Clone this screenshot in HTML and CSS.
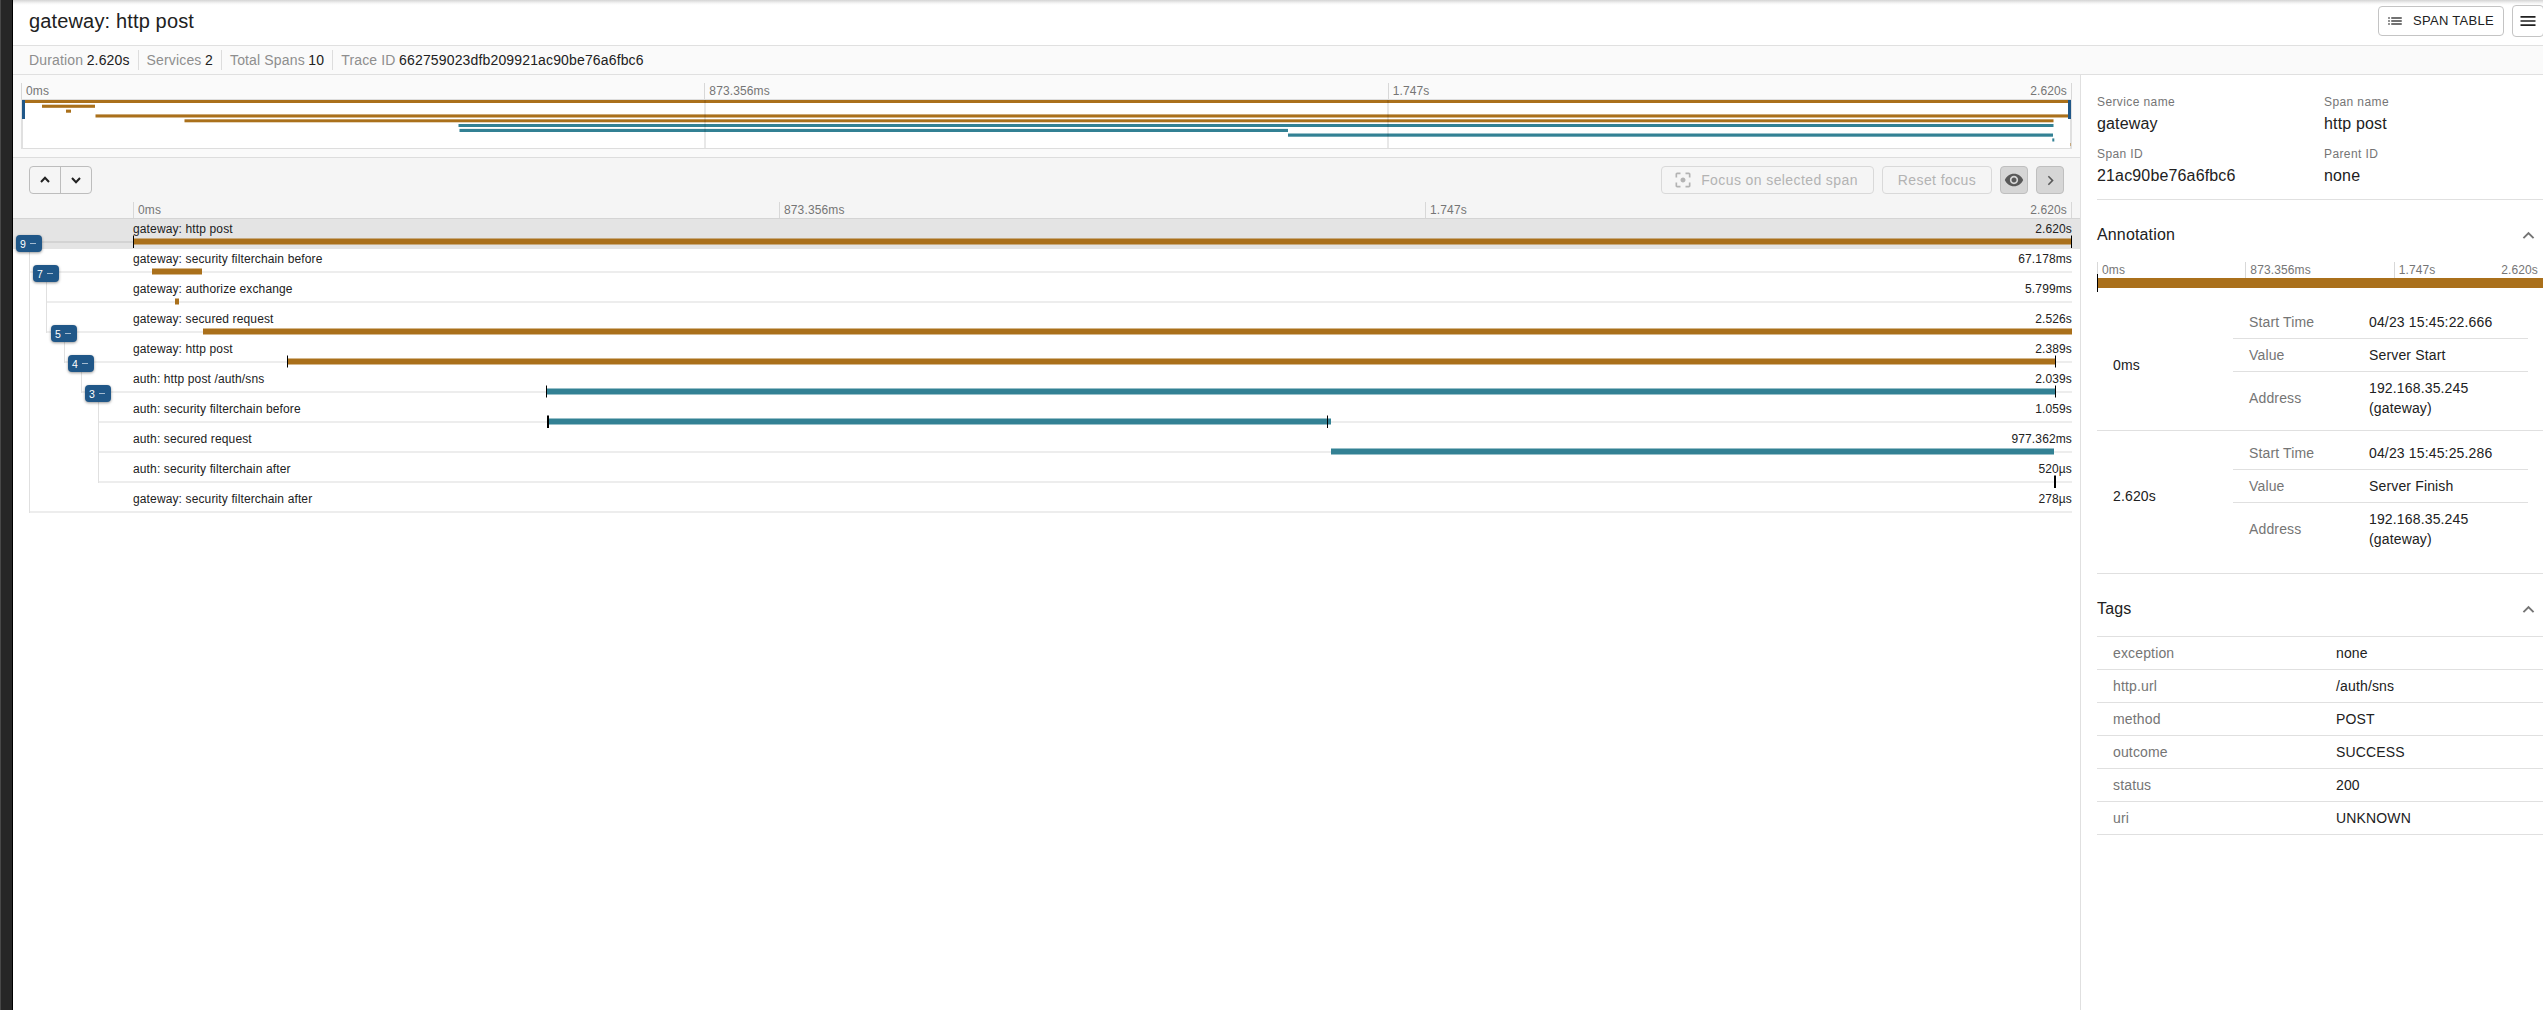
FILE: index.html
```
<!DOCTYPE html>
<html lang="en">
    <head>
        <meta charset="UTF-8" />
        <meta name="viewport" content="width=device-width, initial-scale=1.0" />
        <title>gateway: http post</title>
        <link rel="stylesheet" href="styles.css">
    </head>
    <body>
        <div class="side-strip"></div>
        <div class="page">
            <header class="header">
                <h1 class="title">gateway: http post</h1>
                <div class="header-buttons">
                    <button class="btn btn-table">
                        <svg width="18" height="18" viewBox="0 0 24 24"><path d="M3 13h2v-2H3v2zm0 4h2v-2H3v2zm0-8h2V7H3v2zm4 4h14v-2H7v2zm0 4h14v-2H7v2zM7 7v2h14V7H7z"/></svg>
                        SPAN TABLE
                    </button>
                    <button class="btn btn-menu">
                        <svg width="20" height="20" viewBox="0 0 24 24"><path d="M3 18h18v-2H3v2zm0-5h18v-2H3v2zm0-7v2h18V6H3z"/></svg>
                    </button>
                </div>
            </header>
            <div class="summary">
                <div><span>Duration</span> 2.620s</div>
                <div><span>Services</span> 2</div>
                <div><span>Total Spans</span> 10</div>
                <div><span>Trace ID</span> 662759023dfb209921ac90be76a6fbc6</div>
            </div>
            <div class="content">
                <main class="trace">
                    <section class="minimap">
                        <div class="ruler">
                            <span>0ms</span>
                            <span>873.356ms</span>
                            <span>1.747s</span>
                            <span class="last">2.620s</span>
                        </div>
                        <svg class="minimap-chart" width="2051" height="50">
                            <rect x="0" y="0" width="2051" height="50" fill="#fff"/>
                            <path d="M0 .5H2051M0 49.5H2051" stroke="#ddd"/>
                            <path d="M1 0V50M2050 0V50" stroke="#e0e0e0" stroke-width="2"/>
                            <g fill="#aa701b">
                                <rect x="1" y="1" width="2049" height="3"/>
                                <rect x="21" y="5.7" width="53" height="3.1"/>
                                <rect x="45" y="10.6" width="5" height="3.1"/>
                                <rect x="74.5" y="15.4" width="1975.5" height="3.1"/>
                                <rect x="163.5" y="20.3" width="1869" height="3"/>
                                <rect x="2049" y="44" width="1" height="3" opacity=".5"/>
                            </g>
                            <g fill="#338194">
                                <rect x="437.5" y="25" width="1595" height="3"/>
                                <rect x="438.5" y="29.9" width="828.5" height="3.1"/>
                                <rect x="1267" y="34.5" width="765" height="3.2"/>
                                <rect x="2031.3" y="39.4" width="2" height="3.1"/>
                            </g>
                            <path d="M684 1V49M1367 1V49" stroke="#000" stroke-opacity=".1" stroke-width="1.8"/>
                            <path d="M2.5 1V20M2048.5 1V20" stroke="#205788" stroke-width="3"/>
                        </svg>
                    </section>
                    <div class="toolbar">
                        <div class="btn-group">
                            <button><svg width="16" height="16"><path d="M4 10l4-4.3 4 4.3"/></svg></button>
                            <button><svg width="16" height="16"><path d="M4 6l4 4.3L12 6"/></svg></button>
                        </div>
                        <div class="toolbar-right">
                            <button class="btn btn-focus disabled">
                                <svg width="20" height="20" viewBox="0 0 24 24"><path d="M5 15H3v4c0 1.1.9 2 2 2h4v-2H5v-4zM5 5h4V3H5c-1.1 0-2 .9-2 2v4h2V5zm14-2h-4v2h4v4h2V5c0-1.1-.9-2-2-2zm0 16h-4v2h4c1.1 0 2-.9 2-2v-4h-2v4zM12 9c-1.66 0-3 1.34-3 3s1.34 3 3 3 3-1.34 3-3-1.34-3-3-3z"/></svg>
                                Focus on selected span
                            </button>
                            <button class="btn btn-reset disabled">Reset focus</button>
                            <button class="btn btn-toggle">
                                <svg width="20" height="20" viewBox="0 0 24 24"><path d="M12 4.5C7 4.5 2.73 7.61 1 12c1.73 4.39 6 7.5 11 7.5s9.27-3.11 11-7.5c-1.73-4.39-6-7.5-11-7.5zM12 17c-2.76 0-5-2.24-5-5s2.24-5 5-5 5 2.24 5 5-2.24 5-5 5zm0-8c-1.66 0-3 1.34-3 3s1.34 3 3 3 3-1.34 3-3-1.34-3-3-3z"/></svg>
                            </button>
                            <button class="btn btn-toggle">
                                <svg width="19" height="19" viewBox="0 0 24 24"><path d="M10 6L8.59 7.41 13.17 12l-4.58 4.59L10 18l6-6z"/></svg>
                            </button>
                        </div>
                    </div>
                    <div class="timeline-head">
                        <div class="ruler">
                            <span>0ms</span>
                            <span>873.356ms</span>
                            <span>1.747s</span>
                            <span class="last">2.620s</span>
                        </div>
                    </div>
                    <div class="timeline">
                        <div class="span-row selected"><span>gateway: http post</span><span>2.620s</span></div>
                        <div class="span-row"><span>gateway: security filterchain before</span><span>67.178ms</span></div>
                        <div class="span-row"><span>gateway: authorize exchange</span><span>5.799ms</span></div>
                        <div class="span-row"><span>gateway: secured request</span><span>2.526s</span></div>
                        <div class="span-row"><span>gateway: http post</span><span>2.389s</span></div>
                        <div class="span-row"><span>auth: http post /auth/sns</span><span>2.039s</span></div>
                        <div class="span-row"><span>auth: security filterchain before</span><span>1.059s</span></div>
                        <div class="span-row"><span>auth: secured request</span><span>977.362ms</span></div>
                        <div class="span-row"><span>auth: security filterchain after</span><span>520µs</span></div>
                        <div class="span-row"><span>gateway: security filterchain after</span><span>278µs</span></div>

                        <svg class="timeline-chart" width="2067" height="300">
                            <!-- tree lines -->
                            <g fill="none" stroke="#000" stroke-opacity=".07" stroke-width="2">
                                <path d="M29 23H2059M16 53H2059M34 83H2059M34 113H2059M52 143H2059M69 173H2059M86 203H2059M86 233H2059M86 263H2059M16 293H2059"/>
                            </g>
                            <path fill="none" stroke="#e0e0e0" d="M16.5 33V294M33.5 63V114M51.5 123V144M68.5 153V174M85.5 183V264"/>
                            <!-- span bars -->
                            <g fill="#aa701b">
                                <rect x="120" y="19.5" width="1939" height="6"/>
                                <rect x="139" y="49.5" width="50" height="6"/>
                                <rect x="162" y="79.5" width="4" height="6"/>
                                <rect x="190" y="109.5" width="1869" height="6"/>
                                <rect x="274" y="139.5" width="1768" height="6"/>
                            </g>
                            <g fill="#338194">
                                <rect x="533" y="169.5" width="1509.5" height="6"/>
                                <rect x="534" y="199.5" width="784" height="6"/>
                                <rect x="1318" y="229.5" width="723" height="6"/>
                            </g>
                            <!-- annotations -->
                            <path stroke="#000" d="M120.5 16.5V29M2058.5 16.5V29M274.5 136.5V148.5M2042.5 136.5V148.5M533.5 166.5V178.5M2042.5 166.5V178.5M1314.5 196.5V209"/>
                            <path stroke="#000" stroke-width="2" d="M535 196.5V209M2042 256.5V269"/>
                        </svg>
                        <div class="badge" style="left: 3px; top: 16px">9</div>
                        <div class="badge" style="left: 20px; top: 46px">7</div>
                        <div class="badge" style="left: 38px; top: 106px">5</div>
                        <div class="badge" style="left: 55px; top: 136px">4</div>
                        <div class="badge" style="left: 72px; top: 166px">3</div>
                    </div>
                </main>
                <aside class="detail">
                    <div class="info">
                        <div><label>Service name</label><p>gateway</p></div>
                        <div><label>Span name</label><p>http post</p></div>
                        <div><label>Span ID</label><p>21ac90be76a6fbc6</p></div>
                        <div><label>Parent ID</label><p>none</p></div>
                    </div>
                    <section class="annotation">
                        <div class="section-title">
                            Annotation
                            <svg width="23" height="23" viewBox="0 0 24 24"><path d="M12 8l-6 6 1.41 1.41L12 10.83l4.59 4.58L18 14z"/></svg>
                        </div>
                        <div class="ruler">
                            <span>0ms</span>
                            <span>873.356ms</span>
                            <span>1.747s</span>
                            <span class="last">2.620s</span>
                        </div>
                        <div class="annotation-bar"></div>
                        <div class="event">
                            <div class="event-time">0ms</div>
                            <div class="event-table">
                                <div><span>Start Time</span><span>04/23 15:45:22.666</span></div>
                                <div><span>Value</span><span>Server Start</span></div>
                                <div><span>Address</span><span>192.168.35.245<br>(gateway)</span></div>
                            </div>
                        </div>
                        <div class="event">
                            <div class="event-time">2.620s</div>
                            <div class="event-table">
                                <div><span>Start Time</span><span>04/23 15:45:25.286</span></div>
                                <div><span>Value</span><span>Server Finish</span></div>
                                <div><span>Address</span><span>192.168.35.245<br>(gateway)</span></div>
                            </div>
                        </div>
                    </section>
                    <section>
                        <div class="section-title">
                            Tags
                            <svg width="23" height="23" viewBox="0 0 24 24"><path d="M12 8l-6 6 1.41 1.41L12 10.83l4.59 4.58L18 14z"/></svg>
                        </div>
                        <div class="tags">
                            <div><span>exception</span><span>none</span></div>
                            <div><span>http.url</span><span>/auth/sns</span></div>
                            <div><span>method</span><span>POST</span></div>
                            <div><span>outcome</span><span>SUCCESS</span></div>
                            <div><span>status</span><span>200</span></div>
                            <div><span>uri</span><span>UNKNOWN</span></div>
                        </div>
                    </section>
                </aside>
            </div>
        </div>
    </body>
</html>
```
FILE: styles.css
```
* {
    box-sizing: border-box;
}
body {
    margin: 0;
    display: flex;
    height: 100vh;
    overflow: hidden;
    background-color: white;
    color: #212121;
    font-family: "Liberation Sans", Arial, sans-serif;
    font-size: 14px;
    line-height: 20px;
    letter-spacing: 0.15px;
}
h1,
p {
    margin: 0;
    font-weight: normal;
}
button {
    font: inherit;
    color: inherit;
    padding: 0;
    margin: 0;
    background: none;
}
svg {
    display: block;
    flex: none;
    fill: currentColor;
}

.side-strip {
    flex: none;
    width: 13px;
    background-color: #262626;
    border-left: 1px solid #484848;
    border-right: 1px solid #000;
}
.page {
    flex: 1;
    min-width: 0;
    display: flex;
    flex-direction: column;
}

/* header */
.header {
    display: flex;
    justify-content: space-between;
    align-items: center;
    height: 46px;
    padding: 0 0 3px 16px;
    border-bottom: 1px solid #e0e0e0;
    background: linear-gradient(#d4d4d4, #f4f4f4 3px, #fff 5px);
}
.title {
    font-size: 20px;
    line-height: 32px;
}
.header-buttons {
    display: flex;
    align-items: center;
    gap: 8px;
    margin-right: -1px;
}
.btn {
    display: flex;
    align-items: center;
    justify-content: center;
    height: 28px;
    border: 1px solid #c4c4c4;
    border-radius: 4px;
    letter-spacing: 0.4px;
    white-space: nowrap;
}
.btn-table {
    width: 126px;
    height: 30px;
    gap: 9px;
    padding-right: 2px;
    font-size: 13px;
    letter-spacing: 0.3px;
}
.btn-table svg {
    color: #444;
}
.btn-menu {
    width: 32px;
    height: 32px;
}

.summary {
    display: flex;
    align-items: center;
    height: 29px;
    padding-left: 16px;
    background-color: #fafafa;
    border-bottom: 1px solid #e0e0e0;
}
.summary div {
    padding-right: 8px;
    margin-right: 8px;
    border-right: 1px solid #ddd;
}
.summary div:last-child {
    border: none;
}
.summary span {
    margin-right: -0.5px;
    color: #8e8e8e;
}

.content {
    flex: 1;
    display: flex;
}
.trace {
    width: 2067px;
}

/* ruler with the four time marks */
.ruler {
    display: flex;
    height: 16px;
    font-size: 12px;
    line-height: 16px;
    letter-spacing: 0.13px;
    color: #757575;
}
.ruler span {
    flex: 1;
    padding-left: 4px;
    border-left: 1px solid #d8d8d8;
}
.ruler span.last {
    flex: none;
    width: 55px;
    margin-left: -54px;
    padding: 0 4px 0 0;
    text-align: right;
    border-left: none;
    border-right: 1px solid #d8d8d8;
}

.minimap {
    height: 83px;
    padding: 8px 8px 0;
    background-color: #fafafa;
    border-bottom: 1px solid #ddd;
}

/* toolbar */
.toolbar {
    display: flex;
    justify-content: space-between;
    height: 44px;
    padding: 8px 16px 0;
    background-color: #f5f5f5;
}
.toolbar-right {
    display: flex;
    gap: 8px;
}
.btn-group {
    display: flex;
    width: 63px;
    height: 28px;
    border: 1px solid #bdbdbd;
    border-radius: 4px;
}
.btn-group button {
    flex: 1;
    display: flex;
    align-items: center;
    justify-content: center;
    border: none;
}
.btn-group button + button {
    border-left: 1px solid #bdbdbd;
}
.btn-group path {
    fill: none;
    stroke: #222;
    stroke-width: 2;
}
.disabled {
    color: #b3b3b3;
    border-color: #d9d9d9;
}
.btn-focus {
    width: 213px;
    gap: 8px;
    padding-right: 4px;
}
.btn-reset {
    width: 110px;
}
.btn-toggle {
    width: 28px;
    color: #595959;
    background-color: #d6d6d6;
    border-color: #bfbfbf;
}

/* timeline */
.timeline-head {
    height: 17px;
    padding: 0 8px 0 120px;
    background-color: #f5f5f5;
    border-bottom: 1px solid #d4d4d4;
}
.timeline {
    position: relative;
}
.span-row {
    display: flex;
    justify-content: space-between;
    height: 30px;
    padding: 0 8px 0 120px;
    font-size: 12px;
    letter-spacing: 0.13px;
}
.span-row.selected {
    background-color: #e4e4e4;
}
.timeline-chart {
    position: absolute;
    left: 0;
    top: 0;
}
.badge {
    position: absolute;
    display: flex;
    align-items: center;
    gap: 4px;
    width: 26px;
    height: 17px;
    padding-left: 4px;
    border-radius: 4px;
    background-color: #205788;
    color: white;
    font-size: 10.5px;
    letter-spacing: 0;
    box-shadow: 0 1px 3px rgba(0, 0, 0, 0.4);
}
.badge::after {
    content: "";
    width: 6px;
    height: 1px;
    background-color: #a5bbd0;
}

/* span detail */
.detail {
    flex: 1;
    padding-left: 16px;
    border-left: 1px solid #e0e0e0;
}
.info {
    display: grid;
    grid-template-columns: 1fr 1fr;
    align-content: start;
    column-gap: 8px;
    height: 125px;
    padding-top: 16px;
    border-bottom: 1px solid #e0e0e0;
}
.info > div {
    height: 52px;
}
.info label {
    display: block;
    padding-top: 1px;
    font-size: 12px;
    letter-spacing: 0.4px;
    color: #757575;
}
.info p {
    font-size: 16px;
    line-height: 23px;
}
.section-title {
    display: flex;
    justify-content: space-between;
    align-items: center;
    height: 62px;
    padding: 8px 3px 0 0;
    font-size: 16px;
}
.section-title svg {
    color: #757575;
}
.annotation {
    height: 374px;
    border-bottom: 1px solid #e0e0e0;
}
.annotation-bar {
    position: relative;
    height: 10px;
    margin-bottom: 12px;
    background-color: #aa701b;
}
.annotation-bar::before {
    content: "";
    position: absolute;
    left: 0;
    top: -4px;
    width: 1px;
    height: 18px;
    background-color: black;
}
.annotation .ruler span.last {
    border-right: none;
    padding-right: 5px;
}
.event {
    display: flex;
    align-items: center;
    padding: 6px 15px 6px 16px;
}
.event + .event {
    border-top: 1px solid #e0e0e0;
}
.event-time {
    width: 120px;
}
.event-table {
    flex: 1;
}
.event-table div {
    display: flex;
    align-items: center;
    padding: 6px 0 6px 16px;
    border-bottom: 1px solid #e0e0e0;
}
.event-table div:last-child {
    border-bottom: none;
}
.event-table span:first-child {
    width: 120px;
    color: #757575;
}
.tags {
    border-top: 1px solid #e0e0e0;
}
.tags div {
    display: flex;
    padding: 6px 0;
    border-bottom: 1px solid #e0e0e0;
}
.tags span {
    width: 50%;
    padding-left: 16px;
}
.tags span:first-child {
    color: #757575;
}
```
